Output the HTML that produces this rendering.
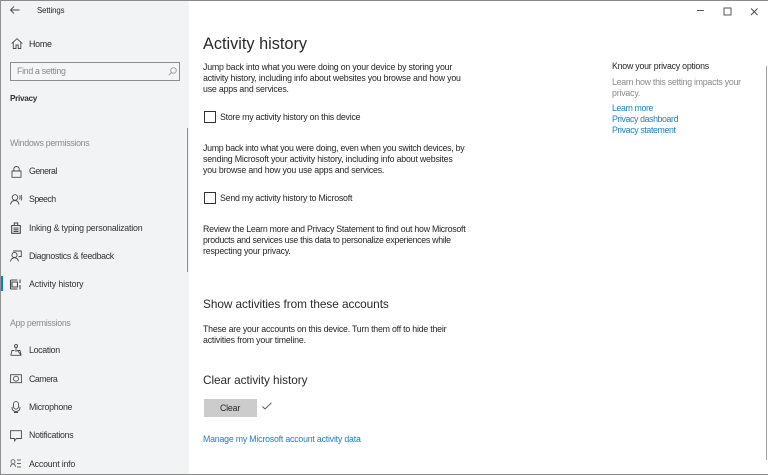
<!DOCTYPE html>
<html><head><meta charset="utf-8"><style>
html,body{margin:0;padding:0}
body{width:768px;height:475px;position:relative;overflow:hidden;background:#fff;font-family:"Liberation Sans",sans-serif;color:#262626}
.t{position:absolute;white-space:nowrap;font-size:8.8px;line-height:11px;letter-spacing:-.19px;filter:blur(.25px)}
.g{color:#8a8a8a}.l{color:#1f7fc4}
.n{color:#333}
.h{font-size:11.8px;line-height:14px;color:#2a2a2a;letter-spacing:-.05px}
svg{position:absolute;overflow:visible;fill:none;stroke:#4a4a4a;stroke-width:.9;filter:blur(.2px)}
.b{position:absolute}
</style></head><body>
<div class="b" style="left:0;top:0;width:189px;height:475px;background:#f1f3f4"></div>
<div class="b" style="left:0;top:0;width:768px;height:1px;background:#8a8a8a"></div>
<div class="b" style="left:0;top:0;width:1px;height:475px;background:#909090"></div>
<div class="b" style="left:0;top:474px;width:768px;height:1px;background:#8a8a8a"></div>
<div class="b" style="left:187px;top:128px;width:1px;height:144px;background:#8e8e8e"></div>
<div class="b" style="left:766px;top:66px;width:1px;height:394px;background:#a0a0a0"></div>
<div class="b" style="left:1px;top:276px;width:2px;height:15px;background:#0f78d0"></div>

<svg style="left:10px;top:5px" width="10" height="10" viewBox="0 0 10 10"><path d="M.5 5H9.500M4 1.500L.5 5L4 8.500"/></svg>
<div class="t" style="left:37px;top:5px;font-size:7.800px;letter-spacing:-.1px">Settings</div>

<svg style="left:11px;top:38px" width="12" height="11" viewBox="0 0 12 11"><path d="M.7 5.500L6 .7L11.300 5.500M2.300 4.500V10.500H5V7H7.200V10.500H9.800V4.500"/></svg>
<div class="t" style="left:29px;top:38.500px">Home</div>

<div class="b" style="left:10px;top:62px;width:168px;height:17px;border:1px solid #8c8c8c;background:#f4f5f6"></div>
<div class="t g" style="left:17px;top:65.500px;letter-spacing:-.3px">Find a setting</div>
<svg style="left:168px;top:67px;stroke:#999" width="9" height="9" viewBox="0 0 9 9"><circle cx="5.500" cy="3.500" r="2.800"/><path d="M3.500 5.500L.7 8.300"/></svg>

<div class="t" style="left:10px;top:93px;font-weight:bold;font-size:8.200px;color:#333;letter-spacing:-.3px">Privacy</div>
<div class="t g" style="left:10px;top:138px;letter-spacing:-.3px">Windows permissions</div>

<svg style="left:11px;top:166px" width="11" height="12" viewBox="0 0 11 12"><path d="M1 5H10V11.300H1ZM2.800 5V3A2.700 2.500 0 0 1 8.200 3V5"/></svg>
<div class="t n" style="left:29px;top:166px;letter-spacing:-.5px">General</div>
<svg style="left:10px;top:194px" width="12" height="11" viewBox="0 0 12 11"><circle cx="5" cy="3.500" r="2.800"/><path d="M.5 10.500C1 7.500 3 6.500 5 6.500S8.500 7.500 9 10.500M9.500 1.500C10.300 2.500 10.300 4.500 9.500 5.500M11 .8C12 2.500 12 5 11 6.500"/></svg>
<div class="t n" style="left:29px;top:194px;letter-spacing:-.55px">Speech</div>
<svg style="left:11px;top:222px" width="10" height="12" viewBox="0 0 10 12"><path d="M.7 3.500H9.300V11.300H.7ZM3.300 3.500V1H6.700V3.500M2.500 6H7.500M2.500 7.800H7.500M2.500 9.500H7.500" stroke-width="1.100"/></svg>
<div class="t n" style="left:29px;top:222.500px">Inking &amp; typing personalization</div>
<svg style="left:10px;top:250px" width="12" height="12" viewBox="0 0 12 12"><circle cx="4.500" cy="5" r="2.600"/><path d="M.5 11.500C1 8.800 2.800 7.800 4.500 7.800S8 8.800 8.500 11.500M3 1H11.300V6.500H8.500"/></svg>
<div class="t n" style="left:29px;top:250.500px;letter-spacing:-.32px">Diagnostics &amp; feedback</div>
<svg style="left:10px;top:279px" width="11" height="11" viewBox="0 0 11 11"><path d="M.5 1V10M2 3H7.500V8H2ZM.5 1H7.500M.5 10H7.500M10 .5V4M10 6V10.500" stroke-width="1.100"/></svg>
<div class="t n" style="left:29px;top:279px;letter-spacing:-.11px">Activity history</div>

<div class="t g" style="left:10px;top:318px;letter-spacing:-.3px">App permissions</div>

<svg style="left:10px;top:344px" width="12" height="12" viewBox="0 0 12 12"><circle cx="6" cy="2" r="1.500"/><path d="M6 3.500V8M.8 11.300L2 6.500H4.500M7.500 6.500H10L11.200 11.300ZM.8 11.300H11.200"/></svg>
<div class="t n" style="left:29px;top:345px;letter-spacing:-.3px">Location</div>
<svg style="left:10px;top:374px" width="12" height="10" viewBox="0 0 12 10"><path d="M.6.700H11.400V8.700H.6Z"/><circle cx="6" cy="4.700" r="2.500"/></svg>
<div class="t n" style="left:29px;top:373.500px;letter-spacing:-.5px">Camera</div>
<svg style="left:11px;top:401px" width="10" height="12" viewBox="0 0 10 12"><rect x="2.500" y=".6" width="5" height="7.500" rx="2.500"/><path d="M1 6V7A4 3.500 0 0 0 9 7V6M5 10.500V11.500M3 11.500H7"/></svg>
<div class="t n" style="left:29px;top:402px;letter-spacing:-.28px">Microphone</div>
<svg style="left:10px;top:430px" width="12" height="12" viewBox="0 0 12 12"><path d="M.6.700H11.400V8.500H6.500L4.500 11V8.500H.6Z"/></svg>
<div class="t n" style="left:29px;top:430px;letter-spacing:-.27px">Notifications</div>
<svg style="left:10px;top:459px;stroke:#666" width="11" height="9" viewBox="0 0 11 9"><path d="M.5 8C.8 5.500 2 5 3 5S5.200 5.500 5.500 8M7 1H11M7 4.500H11M7 8H11"/><circle cx="3" cy="2.700" r="2"/></svg>
<div class="t n" style="left:29px;top:458.500px">Account info</div>

<svg style="left:696px;top:9px;stroke:#444" width="66" height="10" viewBox="0 0 66 10"><path d="M1 1.500H8"/><rect x="28" y="-2" width="7" height="7" transform="translate(0 1)"/><path d="M55 -.5L61.500 6M61.500 -.5L55 6"/></svg>

<div class="t" style="left:203px;top:34px;font-size:16.300px;line-height:20px;color:#2a2a2a;letter-spacing:0">Activity history</div>

<div class="t" style="left:203px;top:62px;letter-spacing:-.2px">Jump back into what you were doing on your device by storing your</div>
<div class="t" style="left:203px;top:73px;letter-spacing:-.2px">activity history, including info about websites you browse and how you</div>
<div class="t" style="left:203px;top:84px">use apps and services.</div>

<div class="b" style="left:204px;top:111px;width:10px;height:10px;border:1px solid #333"></div>
<div class="t" style="left:220px;top:111.500px;letter-spacing:-.22px">Store my activity history on this device</div>

<div class="t" style="left:203px;top:143px;letter-spacing:-.27px">Jump back into what you were doing, even when you switch devices, by</div>
<div class="t" style="left:203px;top:154px">sending Microsoft your activity history, including info about websites</div>
<div class="t" style="left:203px;top:165px">you browse and how you use apps and services.</div>

<div class="b" style="left:204px;top:192px;width:10px;height:10px;border:1px solid #333"></div>
<div class="t" style="left:220px;top:192.500px;letter-spacing:-.22px">Send my activity history to Microsoft</div>

<div class="t" style="left:203px;top:223.500px;letter-spacing:-.25px">Review the Learn more and Privacy Statement to find out how Microsoft</div>
<div class="t" style="left:203px;top:234.500px;letter-spacing:-.29px">products and services use this data to personalize experiences while</div>
<div class="t" style="left:203px;top:245.500px">respecting your privacy.</div>

<div class="t h" style="left:203px;top:297px">Show activities from these accounts</div>

<div class="t" style="left:203px;top:324px;letter-spacing:-.22px">These are your accounts on this device. Turn them off to hide their</div>
<div class="t" style="left:203px;top:335px">activities from your timeline.</div>

<div class="t h" style="left:203px;top:373px">Clear activity history</div>

<div class="b" style="left:204px;top:399px;width:53px;height:18px;background:#cccccc"></div>
<div class="t" style="left:220px;top:403px">Clear</div>
<svg style="left:262px;top:402px;stroke:#555" width="10" height="8" viewBox="0 0 10 8"><path d="M.5 4.500L3 7L9.500 .7"/></svg>

<div class="t l" style="left:203px;top:434px;letter-spacing:-.21px">Manage my Microsoft account activity data</div>

<div class="t" style="left:612px;top:61px;letter-spacing:-.23px">Know your privacy options</div>
<div class="t g" style="left:612px;top:77px;letter-spacing:-.26px">Learn how this setting impacts your</div>
<div class="t g" style="left:612px;top:88px">privacy.</div>
<div class="t l" style="left:612px;top:103px;letter-spacing:-.4px">Learn more</div>
<div class="t l" style="left:612px;top:114px;letter-spacing:-.4px">Privacy dashboard</div>
<div class="t l" style="left:612px;top:125px;letter-spacing:-.37px">Privacy statement</div>
</body></html>
